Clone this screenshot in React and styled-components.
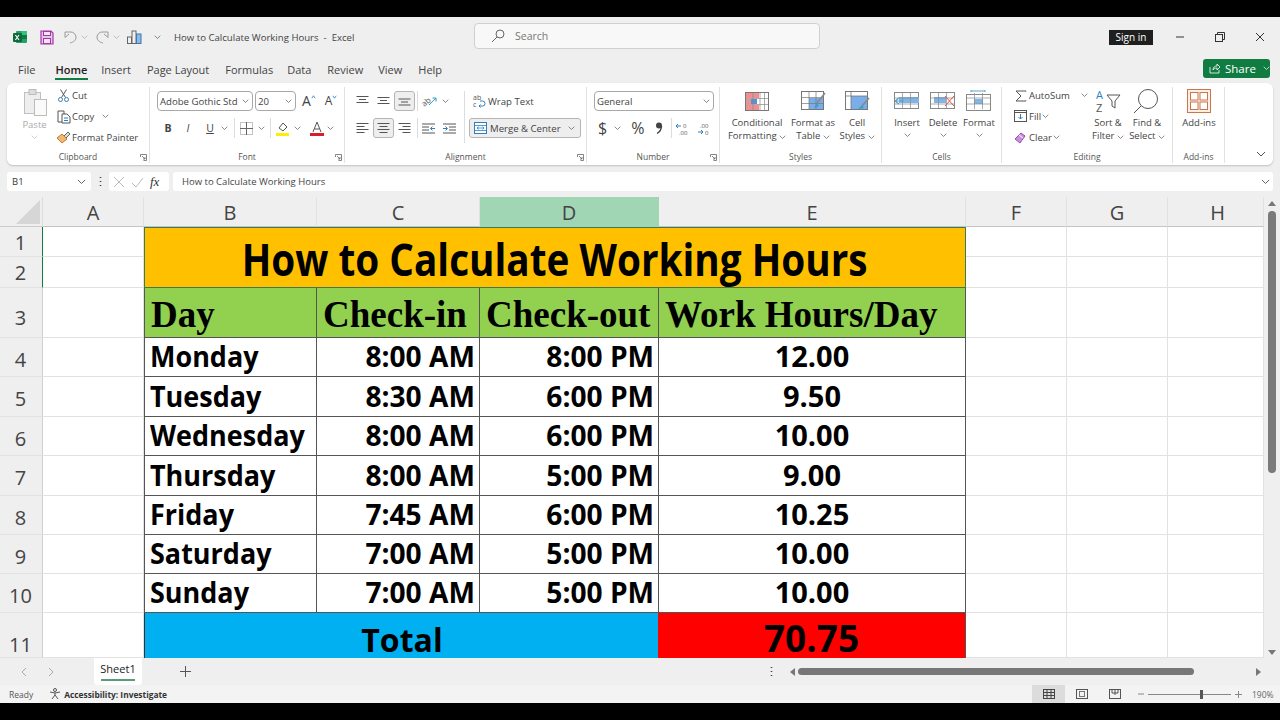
import React from "react";
import styled, { createGlobalStyle } from "styled-components";

const Global = createGlobalStyle`
  html, body { margin: 0; padding: 0; background: #000; width: 1280px; height: 720px; overflow: hidden; }
  * { box-sizing: border-box; }
  svg { overflow: visible; }
`;
const UI = `"Open Sans", "Noto Sans", "Liberation Sans", sans-serif`;

const Page = styled.div`
  width: 1280px; height: 720px; background: #000; padding: 17px 0; font-family: ${UI}; color: #3a3a3a;
`;
const Win = styled.div`
  width: 1280px; height: 686px; background: #efefef; display: flex; flex-direction: column;
`;
const TitleBar = styled.div`
  height: 40px; display: flex; align-items: center; padding: 0 0 0 13px; flex: none;
`;
const QuickIcons = styled.div`display: flex; align-items: center; gap: 0; width: 161px; flex: none;`;
const QIcon = styled.div`display: flex; align-items: center; width: ${p => p.$w}px; flex: none;`;
const Chev = styled.svg`flex: none; fill: none; stroke: ${p => p.$c || "#555"}; stroke-width: 1;`;
const TitleText = styled.div`font-size: 9.6px; color: #444; width: 300px; flex: none; white-space: pre;`;
const Search = styled.div`
  width: 346px; height: 26px; background: #f8f8f8; border: 1px solid #d0d0d0; border-radius: 4px; display: flex; align-items: center; gap: 10px; padding-left: 16px; font-size: 10.5px; color: #777; flex: none; margin-top: -2px;
`;
const TitleRight = styled.div`flex: 1; display: flex; align-items: center; justify-content: flex-end;`;
const SignIn = styled.div`
  background: #1f1f1f; color: #fff; font-size: 10px; width: 44px; height: 15px; line-height: 15px; text-align: center; margin-right: 7px;
`;
const WinBtn = styled.div`width: 40px; height: 20px; display: flex; align-items: center; justify-content: center;`;

const TabsRow = styled.div`height: 26px; display: flex; align-items: center; flex: none; padding: 0 10px 0 18px; position: relative;`;
const Tab = styled.div`
  font-size: 11px; margin-right: ${p => p.$mr ?? 15}px; height: 22px; line-height: 22px; color: ${p => p.$on ? "#222" : "#444"}; font-weight: ${p => p.$on ? 600 : 400}; position: relative;
  ${p => p.$on && `&:after{content:"";position:absolute;left:0;right:-1px;bottom:1px;height:2px;background:#107c41;}`}
`;
const Share = styled.div`
  margin-left: auto; width: 67px; height: 19px; background: #107c41; border-radius: 3px; color: #fff; font-size: 11.5px; display: flex; align-items: center; padding-left: 6px; gap: 1px; margin-top: -3px;
`;
const Ribbon = styled.div`
  margin: 0 7px 0 7px; height: 82px; background: #fff; border-radius: 6px; box-shadow: 0 1px 2px rgba(0,0,0,.2); display: flex; flex: none; position: relative; padding-top: 4px;
`;
const Group = styled.div`
  width: ${p => p.$w}px; flex: none; border-right: 1px solid #e1e1e1; height: 76px; display: flex; flex-direction: column; position: relative;
`;
const GroupBody = styled.div`flex: 1; display: flex; min-height: 0;`;
const GroupLabel = styled.div`
  height: 14px; font-size: 8.5px; color: #555; text-align: center; line-height: 16px; flex: none;
`;
const Launcher = styled.svg`position: absolute; right: 2px; bottom: 2px; width: 7px; height: 7px; fill: none; stroke: #666; stroke-width: .8;`;
const Col = styled.div`display: flex; flex-direction: column; width: ${p => p.$w ? p.$w + "px" : "auto"}; flex: none; align-items: ${p => p.$center ? "center" : "stretch"}; padding: ${p => p.$pad || 0}; gap: ${p => p.$gap || 0}px; margin-top: ${p => p.$mt || 0}px;`;
const Row = styled.div`display: flex; align-items: center; height: ${p => p.$h || 21}px; gap: ${p => p.$gap ?? 1}px; font-size: 9.5px; color: ${p => p.$c || "#444"}; white-space: nowrap; padding-left: ${p => p.$pl || 0}px; flex: none;`;
const RowIcon = styled.span`width: 15px; display: flex; justify-content: center; flex: none;`;
const Big = styled.div`
  display: flex; flex-direction: column; align-items: center; width: ${p => p.$w}px; margin-left: ${p => p.$ml || 0}px; flex: none; font-size: 9.5px; line-height: 13px; color: ${p => p.$c || "#444"}; text-align: center; white-space: nowrap; padding-top: 1px;
`;
const IconBox = styled.div`height: ${p => p.$h || 26}px; display: flex; align-items: center; justify-content: center; margin-bottom: 2px; flex: none;`;
const LowChev = styled.span`display: flex; margin-top: 4px;`;
const Select = styled.div`
  width: ${p => p.$w}px; height: 20px; border: 1px solid #a8a8a8; border-radius: 4px; font-size: 9.6px; display: flex; align-items: center; justify-content: space-between; padding: 0 3px 0 2px; color: #444; flex: none; background: #fff; white-space: nowrap;
`;
const Toggle = styled.div`
  width: ${p => p.$w || 20}px; height: 20px; display: flex; align-items: center; justify-content: ${p => p.$left ? "flex-start" : "center"}; gap: 3px; flex: none; border-radius: 3px;
  ${p => p.$on && `background:#eee;border:1px solid #b5b5b5;`}
  ${p => p.$left && `padding-left:4px;`}
  font-size: 9.6px; color: #444; white-space: nowrap;
`;
const Gap = styled.span`width: ${p => p.$w}px; flex: none;`;
const VSep = styled.div`width: 1px; height: ${p => p.$h || 20}px; background: #ddd; flex: none; margin: ${p => p.$m || "0 3px"};`;
const GlyphB = styled.span`font-size: ${p => p.$s || 11}px; font-weight: ${p => p.$wt || 400}; font-style: ${p => p.$it ? "italic" : "normal"}; text-decoration: ${p => p.$u ? "underline" : "none"}; color: #444; line-height: 1;`;
const PushRight = styled.span`margin-left: auto; margin-right: 5px; display: flex;`;
const Collapse = styled.span`position: absolute; right: 7px; bottom: 8px; display: flex;`;
const FxGlyph = styled.span`font-family: "Liberation Serif", serif; font-style: italic; font-size: 13px; color: #333;`;

const FBar = styled.div`height: 19px; margin: 7px 7px 0 7px; display: flex; flex: none; gap: 0; align-items: center;`;
const NameBox = styled.div`width: 84px; height: 19px; background: #fff; border-radius: 3px; font-size: 9.5px; padding: 0 5px 0 5px; display: flex; align-items: center; justify-content: space-between; flex: none;`;
const Dots = styled.div`width: 18px; display: flex; justify-content: center; flex: none;`;
const FxBox = styled.div`width: 60px; height: 19px; background: #fff; border-radius: 3px; display: flex; align-items: center; gap: 6px; padding-left: 4px; flex: none; margin-right: 4px;`;
const Formula = styled.div`flex: 1; height: 19px; background: #fff; border-radius: 3px; font-size: 9.5px; display: flex; align-items: center; justify-content: space-between; padding: 0 3px 0 9px; color: #444;`;

const Sheet = styled.div`
  margin-top: 6px; height: 461px; display: grid; flex: none; background: #fff;
  grid-template-columns: 43px 101px 173px 163px 179px 307px 101px 101px 96px 16px;
  grid-template-rows: 30px 30px 31px 50px 39px 40px 39px 40px 39px 39px 39px 45px;
`;
const Corner = styled.div`background: #efefef; position: relative; border-right: 1px solid #ddd; border-bottom: 1px solid #ccc;
  &:after{content:"";position:absolute;right:2px;bottom:2px;width:0;height:0;border-style:solid;border-width:0 0 24px 24px;border-color:transparent transparent #d6d6d6 transparent;}
`;
const ColHead = styled.div`
  background: ${p => p.$sel ? "#a1d6b4" : "#efefef"}; border-right: 1px solid ${p => p.$sel ? "#a1d6b4" : "#e2e2e2"}; border-bottom: 1px solid ${p => p.$sel ? "#a1d6b4" : "#c4c4c4"};
  font-size: 20px; color: #444; display: flex; align-items: center; justify-content: center; padding-top: 2px; padding-left: ${p => p.$pl || 0}px;
`;
const RowHead = styled.div`
  background: #efefef; border-right: 1px solid ${p => p.$sel ? "#107c41" : "#d0d0d0"}; border-bottom: 1px solid #e2e2e2; font-size: 20px; color: #444; display: flex; align-items: center; justify-content: center; padding: ${p => p.$dy || 0}px 1px 0 0; line-height: 1;
`;
const Empty = styled.div`background: #fff; border-right: 1px solid #e2e2e2; border-bottom: 1px solid #e2e2e2;`;
const Scroll = styled.div`grid-column: 10; grid-row: 1 / span 12; background: #efefef; display: flex; flex-direction: column; align-items: center; padding-top: 4px; position: relative;`;
const Thumb = styled.div`width: 8px; height: 262px; border-radius: 4px; background: #7a7a7a; margin-top: 5px; flex: none;`;
const Tri = styled.div`width: 0; height: 0; border-style: solid; border-width: ${p => p.$up ? "0 4px 5px 4px" : "5px 4px 0 4px"}; border-color: ${p => p.$up ? "transparent transparent #777 transparent" : "#777 transparent transparent transparent"}; flex: none; margin-top: ${p => p.$auto ? "auto" : 0}; margin-bottom: ${p => p.$auto ? "3px" : 0};`;
const BODY = `"Open Sans", "Noto Sans", sans-serif`;
const TitleCell = styled.div`
  grid-column: 3 / span 4; grid-row: 2 / span 2; background: #ffc000; border: 1px solid #3f7a4f; display: flex; align-items: center; justify-content: center;
  font-family: ${BODY}; font-weight: 700; font-size: 44px; line-height: 1; color: #000; padding-top: 3px;
`;
const Squeeze = styled.span`display: inline-block; transform: scaleX(${p => p.$x}); transform-origin: ${p => p.$o || "center"}; white-space: nowrap;`;
const HeadCell = styled.div`
  background: #92d050; border-right: 1px solid #555; border-bottom: 1px solid #555; font-family: "Liberation Serif", serif; font-weight: 700; font-size: 37px; line-height: 1; color: #000; display: flex; align-items: center; padding-left: 6px; white-space: nowrap; padding-top: 3px;
  ${p => p.$first && "border-left:1px solid #555;"}
`;
const Cell = styled.div`
  background: #fff; border-right: 1px solid #555; border-bottom: 1px solid #555; font-family: ${BODY}; font-weight: 700; font-size: 29px; line-height: 1; color: #000; display: flex; align-items: center; white-space: nowrap;
  justify-content: ${p => p.$a === "r" ? "flex-end" : p.$a === "c" ? "center" : "flex-start"};
  padding: 0 ${p => p.$a === "r" ? 4 : 5}px 3px 5px;
  ${p => p.$first && "border-left:1px solid #555;"}
`;
const Total = styled.div`
  grid-column: ${p => p.$col}; grid-row: 12; background: ${p => p.$bg}; display: flex; justify-content: center; align-items: center; font-family: ${BODY}; font-weight: 700; color: #000; font-size: ${p => p.$s}px; line-height: 1; padding-top: ${p => p.$pt}px; border-left: ${p => p.$br ? "none" : "1px solid #333"}; margin-left: ${p => p.$br ? -1 : 0}px; border-right: ${p => p.$br ? "1px solid #555" : "none"};
`;

const SheetBar = styled.div`height: 27px; display: flex; align-items: center; flex: none; background: #efefef;`;
const Nav = styled.div`width: 94px; display: flex; gap: 19px; padding-left: 20px; flex: none;`;
const SheetTab = styled.div`width: 48px; height: 27px; background: #fff; border-radius: 0 0 3px 3px; font-size: 11px; font-weight: 400; color: #222; text-align: center; line-height: 22px; position: relative; flex: none;
  &:after{content:"";position:absolute;left:7px;right:7px;bottom:4px;height:2px;background:#5b9b7b;}
`;
const PlusBox = styled.div`margin-left: 38px; flex: none; width: 20px; display: flex;`;
const HScroll = styled.div`margin-left: auto; display: flex; align-items: center; width: 491px; flex: none; margin-right: 19px; gap: 3px;`;
const HDots = styled.span`display: flex; margin-right: 14px; flex: none;`;
const HThumb = styled.div`width: 396px; height: 7px; background: #777; border-radius: 4px; flex: none;`;
const HTri = styled.div`width: 0; height: 0; border-style: solid; border-width: ${p => p.$left ? "4px 5px 4px 0" : "4px 0 4px 5px"}; border-color: ${p => p.$left ? "transparent #777 transparent transparent" : "transparent transparent transparent #777"}; flex: none; margin-left: ${p => p.$auto ? "auto" : 0};`;
const Status = styled.div`height: 18px; background: #f3f3f3; display: flex; align-items: center; padding-left: 9px; font-size: 8.5px; color: #555; flex: none;`;
const Access = styled.div`display: flex; align-items: center; gap: 2px; margin-left: 16px; font-weight: 700; color: #333; font-size: 8.4px;`;
const StatusRight = styled.div`margin-left: auto; display: flex; align-items: center; height: 18px;`;
const ViewBtn = styled.div`width: 33px; height: 18px; display: flex; align-items: center; justify-content: center; background: ${p => p.$on ? "#dcdcdc" : "transparent"}; flex: none;`;
const Zoom = styled.div`display: flex; align-items: center; margin-left: 7px; width: 104px; gap: 4px; flex: none;`;
const Slider = styled.div`width: 83px; height: 1px; background: #888; position: relative; flex: none;
  &:after{content:"";position:absolute;left:52px;top:-4px;width:3px;height:9px;background:#555;}
`;
const Pct = styled.div`font-size: 8.5px; color: #666; width: 28px; text-align: left; margin-left: 10px; flex: none;`;

const Down = ({ s = 7, c }) => <Chev $c={c} width={s} height={s * 0.6} viewBox="0 0 10 6"><path d="M1 1l4 4 4-4" /></Chev>;
const Svg = ({ w, h, children, ...r }) => <svg width={w} height={h} viewBox={`0 0 ${w} ${h}`} fill="none" style={{ flex: "none" }} {...r}>{children}</svg>;
const Launch = () => <Launcher viewBox="0 0 7 7"><path d="M.5 3V.5H6.5V6.5H3.5M2 2l3 3M5 3v2H3" /></Launcher>;

const ExcelLogo = () => (
  <Svg w={15} h={14}>
    <rect x="3" y="1" width="11" height="12" rx="1" fill="#21a366" />
    <rect x="8.5" y="1" width="5.5" height="4" fill="#33c481" />
    <rect x="8.5" y="5" width="5.5" height="4" fill="#107c41" />
    <rect x="0" y="3" width="9" height="9" rx="1" fill="#0e6a38" />
    <path d="M2.4 5l3.6 5M6 5L2.4 10" stroke="#fff" strokeWidth="1.1" />
  </Svg>
);
const Save = () => (
  <Svg w={14} h={15}>
    <path d="M1 1h10l2 2v11H1z" stroke="#a436a8" strokeWidth="1.2" fill="#e6c7ea" />
    <rect x="3.5" y="1.5" width="7" height="4" stroke="#a436a8" fill="#f3e6f4" />
    <rect x="3.5" y="8.5" width="7" height="5" stroke="#a436a8" fill="#f3e6f4" />
  </Svg>
);
const Undo = ({ flip }) => (
  <Svg w={13} h={14} style={{ flex: "none", transform: flip ? "scaleX(-1)" : "none" }}>
    <path d="M6 13c4-1 6-3 6-6 0-3-3-5-5-5H1M1 2v5.5M1 7.5L5 4" stroke="#9a9a9a" strokeWidth="1" />
  </Svg>
);
const Chart = () => (
  <Svg w={15} h={14}>
    <rect x=".5" y="7" width="4" height="6.5" stroke="#666" />
    <rect x="5" y="1" width="4" height="12.5" stroke="#666" />
    <rect x="9.5" y="4" width="4.5" height="9.5" fill="#8db9e2" stroke="#3d78b3" />
  </Svg>
);
const Clipboard = () => (
  <Svg w={24} h={27}>
    <rect x="1.500" y="3.500" width="16" height="21" fill="#eee" stroke="#c0c0c0" />
    <rect x="6" y=".5" width="7" height="5" fill="#ddd" stroke="#bbb" />
    <rect x="11.500" y="10.500" width="12" height="16" fill="#fafafa" stroke="#bcbcbc" />
  </Svg>
);
const Scissors = () => (
  <Svg w={11} h={13}><path d="M2.500 .5l5 8M8.500 .5l-5 8" stroke="#555" /><circle cx="2.500" cy="10.500" r="2" stroke="#2f7fbf" /><circle cx="8.500" cy="10.500" r="2" stroke="#2f7fbf" /></Svg>
);
const Copy = () => (
  <Svg w={14} h={14}><path d="M1 1h6v3M1 1v11h4" stroke="#555" /><path d="M5 4h5l3 3v6H5z" stroke="#555" fill="#fff" /><path d="M7 8h4M7 10.500h4" stroke="#2f7fbf" /></Svg>
);
const Brush = () => (
  <Svg w={15} h={13}><path d="M8 5l4-4 2 2-4 4" stroke="#666" fill="#ddd" /><path d="M1 7l5-4 5 5-5 4z" fill="#f1b873" stroke="#c67b2f" /></Svg>
);
const Lines = ({ kind }) => {
  const w = [12, 8, 12, 8];
  return (
    <Svg w={13} h={12}>
      {[1.5, 4.5, 7.5, 10.5].map((y, i) => {
        const ww = kind === "center" ? (i % 2 ? 8 : 12) : w[i];
        const x = kind === "left" ? 0.5 : kind === "right" ? 12.5 - ww : 6.5 - ww / 2;
        return <path key={y} d={`M${x} ${y}h${ww}`} stroke="#555" />;
      })}
    </Svg>
  );
};
const VAlign = ({ y }) => (
  <Svg w={13} h={10}>
    <path d={`M0.5 ${y}h12M3 ${y + 3}h7`} stroke="#555" />
    <path d={`M0.5 ${y + 6}h12`} stroke="#555" />
  </Svg>
);
const Indent = ({ flip }) => (
  <Svg w={13} h={11} style={{ flex: "none", transform: flip ? "scaleX(-1)" : "none" }}>
    <path d="M0 1h13M6 4h7M6 7h7M0 10h13" stroke="#555" />
    <path d="M0 5.500h4M2.500 3.500l2 2-2 2" stroke="#2f7fbf" />
  </Svg>
);
const Orient = () => (
  <Svg w={15} h={13}><text x="0" y="10" fontSize="8" fill="#555" transform="rotate(-40 4 8)" fontFamily="Open Sans">ab</text><path d="M7 10L14 3M10.500 3H14V6.500" stroke="#2f9fb5" /></Svg>
);
const Wrap = () => (
  <Svg w={12} h={14}><text x="0" y="6" fontSize="7" fill="#555" fontFamily="Open Sans">ab</text><text x="0" y="13" fontSize="7" fill="#555" fontFamily="Open Sans">c</text><path d="M7 7h2.500a2 2 0 010 5H6M7.500 10.500L6 12l1.500 1.500" stroke="#2f7fbf" /></Svg>
);
const Merge = () => (
  <Svg w={13} h={12}><rect x=".5" y=".5" width="12" height="11" stroke="#2f7fbf" fill="#fff" /><path d="M.5 3.500h12M.5 8.500h12M3 6h7M3 6l1.500-1.500M3 6l1.500 1.500M10 6L8.500 4.500M10 6L8.500 7.500" stroke="#2f7fbf" strokeWidth=".8" /></Svg>
);
const Borders = () => (
  <Svg w={13} h={13}><rect x=".5" y=".5" width="12" height="12" stroke="#888" strokeDasharray="1 1" /><path d="M6.500 0v13M0 6.500h13" stroke="#666" /></Svg>
);
const Fill = () => (
  <Svg w={13} h={15}><path d="M3 7l4-5 4 4-4 4z" stroke="#555" fill="#fff" /><rect y="12" width="13" height="3" fill="#ffee00" /></Svg>
);
const FontColor = () => (
  <Svg w={14} h={15}><path d="M3 11L7 1l4 10M4.500 8h5" stroke="#555" /><rect y="12" width="14" height="3" fill="#d81e2c" /></Svg>
);
const Comma = () => (
  <Svg w={8} h={12}><circle cx="4" cy="3.500" r="3" fill="#444" /><path d="M6.500 4c0 4-2 6-4.500 7.500" stroke="#444" strokeWidth="1.400" /></Svg>
);
const CondFmt = () => (
  <Svg w={24} h={19}>
    <rect x=".5" y=".5" width="23" height="18" fill="#fff" stroke="#777" />
    <rect x="1" y="1" width="13" height="5" fill="#f08f8f" /><rect x="1" y="7" width="5" height="5" fill="#f08f8f" /><rect x="6" y="7" width="6" height="5" fill="#5c8fd6" /><rect x="1" y="13" width="13" height="5" fill="#f08f8f" />
    <path d="M8 1v17M15 1v17M19.500 1v17M1 6.500h22M1 12.500h22" stroke="#888" strokeWidth=".7" />
  </Svg>
);
const FmtTable = () => (
  <Svg w={25} h={20}>
    <rect x=".5" y=".5" width="22" height="18" fill="#fff" stroke="#777" />
    <rect x="8" y="7" width="14" height="11" fill="#79aeea" />
    <path d="M8 1v17M15 1v17M1 6.500h22M1 12.500h22" stroke="#777" strokeWidth=".7" />
    <path d="M24 2l-8 10" stroke="#888" strokeWidth="1.600" />
    <path d="M16 12l-3 5 5-2z" fill="#3f9dc9" />
  </Svg>
);
const CellStyles = () => (
  <Svg w={25} h={20}>
    <rect x=".5" y=".5" width="22" height="18" fill="#fff" stroke="#777" />
    <rect x="6" y="5" width="16" height="13" fill="#79aeea" />
    <path d="M1 5h22M6 1v17" stroke="#777" strokeWidth=".8" />
    <path d="M24 7l-7 8" stroke="#888" strokeWidth="1.600" />
    <path d="M17 14l-4 4 6-1z" fill="#3f9dc9" />
  </Svg>
);
const CellIcon = ({ kind }) => (
  <Svg w={26} h={22}>
    {kind === "format" && <path d="M5 1h14M5 0v2M19 0v2" stroke="#5aa0c8" />}
    <rect x=".5" y={kind === "format" ? 4.5 : 2.5} width="24" height="16" fill="#fff" stroke="#888" />
    <rect x={kind === "format" ? 8 : kind === "insert" ? 5 : 4} y={kind === "format" ? 9 : 7} width={kind === "delete" ? 12 : kind === "format" ? 9 : 20} height={kind === "format" ? 5 : 6} fill="#7fb5e8" />
    <path d="M8.500 3v16M16.500 3v16M1 8h24M1 14h24" stroke="#888" strokeWidth=".7" />
    {kind === "insert" && <path d="M1 11h9M1 11l4-3M1 11l4 3" stroke="#5aa0c8" strokeWidth="1.2" />}
    {kind === "delete" && <path d="M15 6l9 10M24 6l-9 10" stroke="#d9534f" />}
  </Svg>
);
const Sigma = () => <Svg w={12} h={12}><path d="M11 1.500V1H1l5 5-5 5h10v-.5" stroke="#555" /></Svg>;
const FillIc = () => <Svg w={14} h={13}><rect x=".5" y=".5" width="12" height="11" stroke="#555" /><path d="M1 2.500h11" stroke="#555" /><path d="M6.500 4v5M4.500 7l2 2 2-2" stroke="#2f7fbf" /></Svg>;
const Eraser = () => <Svg w={13} h={13}><path d="M1 8l6-6 4 3-5 7z" fill="#c78fdc" stroke="#9a4fb5" /><path d="M5 4l4 3" stroke="#fff" /></Svg>;
const SortIc = () => (
  <Svg w={26} h={24}>
    <text x="1" y="10" fontSize="11" fill="#2f7fbf" fontFamily="Open Sans">A</text>
    <text x="1" y="23" fontSize="11" fill="#555" fontFamily="Open Sans">Z</text>
    <path d="M12 6h13l-5 6v7l-3-2v-5z" stroke="#555" fill="#fff" />
  </Svg>
);
const Find = () => <Svg w={26} h={25}><circle cx="14" cy="10" r="9.500" stroke="#555" /><path d="M7 17L0 24" stroke="#555" /></Svg>;
const AddIns = () => (
  <Svg w={24} h={24}><rect x=".5" y=".5" width="23" height="23" stroke="#c9764b" fill="#fbeee7" /><rect x="3.500" y="3.500" width="7.500" height="7.500" stroke="#c9764b" fill="#fff" /><rect x="13" y="3.500" width="7.500" height="7.500" stroke="#c9764b" fill="#fff" /><rect x="3.500" y="13" width="7.500" height="7.500" stroke="#c9764b" fill="#fff" /><rect x="13" y="13" width="7.500" height="7.500" stroke="#c9764b" fill="#fff" /></Svg>
);

const hours = [
  ["Monday", "8:00 AM", "8:00 PM", "12.00"],
  ["Tuesday", "8:30 AM", "6:00 PM", "9.50"],
  ["Wednesday", "8:00 AM", "6:00 PM", "10.00"],
  ["Thursday", "8:00 AM", "5:00 PM", "9.00"],
  ["Friday", "7:45 AM", "6:00 PM", "10.25"],
  ["Saturday", "7:00 AM", "5:00 PM", "10.00"],
  ["Sunday", "7:00 AM", "5:00 PM", "10.00"],
];

const TabsList = [["File", 20], ["Home", 14], ["Insert", 16], ["Page Layout", 16], ["Formulas", 14], ["Data", 16], ["Review", 15], ["View", 16], ["Help", 0]];

export default function App() {
  const tail = ["F", "G", "H"];
  return (
    <Page>
      <Global />
      <Win>
        <TitleBar>
          <QuickIcons>
            <QIcon $w={27}><ExcelLogo /></QIcon>
            <QIcon $w={24}><Save /></QIcon>
            <QIcon $w={32}><Undo /><Gap $w={4} /><Down c="#aaa" /></QIcon>
            <QIcon $w={31}><Undo flip /><Gap $w={4} /><Down c="#aaa" /></QIcon>
            <QIcon $w={27}><Chart /></QIcon>
            <QIcon $w={20}><Down /></QIcon>
          </QuickIcons>
          <TitleText>{"How to Calculate Working Hours  -  Excel"}</TitleText>
          <Search>
            <Svg w={14} h={14}><circle cx="9" cy="5" r="4" stroke="#666" /><path d="M6 8l-5 5" stroke="#666" /></Svg>
            Search
          </Search>
          <TitleRight>
            <SignIn>Sign in</SignIn>
            <WinBtn><Svg w={10} h={10}><path d="M1 5h8" stroke="#333" /></Svg></WinBtn>
            <WinBtn><Svg w={10} h={10}><rect x=".5" y="2.500" width="7" height="7" stroke="#333" /><path d="M2.500 2V.5h7v7H8" stroke="#333" /></Svg></WinBtn>
            <WinBtn><Svg w={10} h={10}><path d="M1 1l8 8M9 1L1 9" stroke="#333" /></Svg></WinBtn>
          </TitleRight>
        </TitleBar>

        <TabsRow>
          {TabsList.map(([t, m]) => <Tab key={t} $on={t === "Home"} $mr={m}>{t}</Tab>)}
          <Share>
            <Svg w={12} h={11}><path d="M1 4v6h9V7M4 7c0-3 2-4 4-4V1l3 3-3 3V5C6 5 5 5.500 4 7z" stroke="#fff" strokeWidth=".8" /></Svg>
            <Gap $w={2} />
            Share
            <Gap $w={5} />
            <Down c="#fff" />
          </Share>
        </TabsRow>

        <Ribbon>
          <Group $w={143}>
            <GroupBody>
              <Big $w={43} $ml={6} $c="#aaa">
                <IconBox $h={28}><Clipboard /></IconBox>
                Paste
                <LowChev><Down c="#bbb" /></LowChev>
              </Big>
              <Col $mt={-2}>
                <Row><RowIcon><Scissors /></RowIcon>Cut</Row>
                <Row><RowIcon><Copy /></RowIcon>Copy<Gap $w={6} /><Down /></Row>
                <Row><RowIcon><Brush /></RowIcon>Format Painter</Row>
              </Col>
            </GroupBody>
            <GroupLabel>Clipboard</GroupLabel>
            <Launch />
          </Group>

          <Group $w={195}>
            <GroupBody>
              <Col $pad="5px 0 0 7px" $gap={7} $mt={-1}>
                <Row $h={20} $gap={0}>
                  <Select $w={96}>Adobe Gothic Std<Down /></Select>
                  <Gap $w={2} />
                  <Select $w={41}>20<Down /></Select>
                  <Gap $w={6} />
                  <GlyphB $s={14}>A</GlyphB><Chev width="5" height="4" viewBox="0 0 6 4" style={{ marginTop: -8 }} $c="#2f7fbf"><path d="M1 3.500l2-3 2 3" /></Chev>
                  <Gap $w={9} />
                  <GlyphB $s={12}>A</GlyphB><Chev width="5" height="4" viewBox="0 0 6 4" style={{ marginTop: -8 }} $c="#2f7fbf"><path d="M1 .5l2 3 2-3" /></Chev>
                </Row>
                <Row $h={20} $gap={0} $pl={1}>
                  <Toggle><GlyphB $wt={700} $s={10.5}>B</GlyphB></Toggle>
                  <Toggle><GlyphB $it $s={10.5}>I</GlyphB></Toggle>
                  <Gap $w={2} />
                  <Toggle><GlyphB $u $s={10.5}>U</GlyphB></Toggle>
                  <Gap $w={1} />
                  <Down />
                  <VSep $m="0 5px 0 6px" />
                  <Borders />
                  <Gap $w={5} /><Down />
                  <VSep $m="0 5px" />
                  <Fill />
                  <Gap $w={5} /><Down />
                  <Gap $w={9} />
                  <FontColor />
                  <Gap $w={3} /><Down />
                </Row>
              </Col>
            </GroupBody>
            <GroupLabel>Font</GroupLabel>
            <Launch />
          </Group>

          <Group $w={242}>
            <GroupBody>
              <Col $w={119} $pad="5px 0 0 7px" $gap={7} $mt={-1}>
                <Row $h={20} $gap={0}>
                  <Toggle $w={21}><VAlign y={0.5} /></Toggle>
                  <Toggle $w={21}><VAlign y={1.5} /></Toggle>
                  <Toggle $w={21} $on><VAlign y={3} /></Toggle>
                  <VSep $m="0 4px 0 2px" />
                  <Orient />
                  <Gap $w={5} />
                  <Down />
                </Row>
                <Row $h={20} $gap={0}>
                  <Toggle $w={21}><Lines kind="left" /></Toggle>
                  <Toggle $w={21} $on><Lines kind="center" /></Toggle>
                  <Toggle $w={21}><Lines kind="right" /></Toggle>
                  <VSep $m="0 4px 0 2px" />
                  <Indent flip />
                  <Gap $w={8} />
                  <Indent />
                </Row>
              </Col>
              <VSep $h={52} $m="4px 4px 0 0" />
              <Col $pad="5px 0 0 0" $gap={7} $mt={-1}>
                <Toggle $w={112} $left><Wrap />Wrap Text</Toggle>
                <Toggle $w={112} $left $on><Merge />Merge &amp; Center<PushRight><Down /></PushRight></Toggle>
              </Col>
            </GroupBody>
            <GroupLabel>Alignment</GroupLabel>
            <Launch />
          </Group>

          <Group $w={133}>
            <GroupBody>
              <Col $pad="5px 0 0 7px" $gap={7} $mt={-1}>
                <Select $w={120}>General<Down /></Select>
                <Row $h={20} $gap={0} $pl={4}>
                  <GlyphB $s={16}>$</GlyphB><Gap $w={7} /><Down />
                  <Gap $w={10} />
                  <GlyphB $s={16}>%</GlyphB>
                  <Gap $w={11} />
                  <Comma />
                  <VSep $m="0 4px 0 8px" />
                  <Svg w={14} h={13}><path d="M0 4h5M0 4l2-2M0 4l2 2" stroke="#2f7fbf" /><text x="7" y="6" fontSize="6" fill="#555" fontFamily="Open Sans">0</text><text x="3" y="13" fontSize="6" fill="#555" fontFamily="Open Sans">.00</text></Svg>
                  <Gap $w={7} />
                  <Svg w={14} h={13}><text x="3" y="6" fontSize="6" fill="#555" fontFamily="Open Sans">.00</text><path d="M1 10h5M6 10l-2-2M6 10l-2 2" stroke="#2f7fbf" /><text x="8" y="13" fontSize="6" fill="#555" fontFamily="Open Sans">0</text></Svg>
                </Row>
              </Col>
            </GroupBody>
            <GroupLabel>Number</GroupLabel>
            <Launch />
          </Group>

          <Group $w={162}>
            <GroupBody>
              <Big $w={64} $ml={5}><IconBox><CondFmt /></IconBox>Conditional<span>Formatting <Down /></span></Big>
              <Big $w={44} $ml={2}><IconBox><FmtTable /></IconBox>Format as<span>Table <Down /></span></Big>
              <Big $w={40} $ml={2}><IconBox><CellStyles /></IconBox>Cell<span>Styles <Down /></span></Big>
            </GroupBody>
            <GroupLabel>Styles</GroupLabel>
          </Group>

          <Group $w={120}>
            <GroupBody>
              <Big $w={36} $ml={7}><IconBox><CellIcon kind="insert" /></IconBox>Insert<LowChev><Down /></LowChev></Big>
              <Big $w={36}><IconBox><CellIcon kind="delete" /></IconBox>Delete<LowChev><Down /></LowChev></Big>
              <Big $w={36}><IconBox><CellIcon kind="format" /></IconBox>Format<LowChev><Down /></LowChev></Big>
            </GroupBody>
            <GroupLabel>Cells</GroupLabel>
          </Group>

          <Group $w={171}>
            <GroupBody>
              <Col $w={87} $pad="0 0 0 11px" $mt={-2}>
                <Row><RowIcon><Sigma /></RowIcon>AutoSum<Gap $w={9} /><Down /></Row>
                <Row><RowIcon><FillIc /></RowIcon>Fill<Down /></Row>
                <Row><RowIcon><Eraser /></RowIcon>Clear<Down /></Row>
              </Col>
              <Big $w={38}><IconBox><SortIc /></IconBox>Sort &amp;<span>Filter <Down /></span></Big>
              <Big $w={40}><IconBox><Find /></IconBox>Find &amp;<span>Select <Down /></span></Big>
            </GroupBody>
            <GroupLabel>Editing</GroupLabel>
          </Group>

          <Group $w={52}>
            <GroupBody>
              <Big $w={52}><IconBox><AddIns /></IconBox>Add-ins</Big>
            </GroupBody>
            <GroupLabel>Add-ins</GroupLabel>
          </Group>
          <Collapse><Down s={10} /></Collapse>
        </Ribbon>

        <FBar>
          <NameBox>B1<Down s={9} /></NameBox>
          <Dots><Svg w={3} h={11}><path d="M1.500 1v1M1.500 5v1M1.500 9v1" stroke="#444" strokeWidth="1.600" /></Svg></Dots>
          <FxBox>
            <Svg w={12} h={12}><path d="M1 1l10 10M11 1L1 11" stroke="#bbb" /></Svg>
            <Svg w={13} h={12}><path d="M1 7l4 4 7-9" stroke="#bbb" /></Svg>
            <FxGlyph>fx</FxGlyph>
          </FxBox>
          <Formula>How to Calculate Working Hours<Down s={9} /></Formula>
        </FBar>

        <Sheet>
          <Corner />
          {["A", "B", "C", "D", "E", "F", "G"].map(c => <ColHead key={c} $sel={c === "D"}>{c}</ColHead>)}
          <ColHead $pl={4}>H</ColHead>
          <Scroll><Tri $up /><Thumb /><Tri $auto /></Scroll>

          <RowHead $sel $dy={2}>1</RowHead><Empty />
          <TitleCell><Squeeze $x={0.88}>How to Calculate Working Hours</Squeeze></TitleCell>
          {tail.map(c => <Empty key={c} />)}

          <RowHead $sel $dy={1}>2</RowHead><Empty />
          {tail.map(c => <Empty key={c} />)}

          <RowHead $dy={10}>3</RowHead><Empty />
          <HeadCell $first>Day</HeadCell><HeadCell>Check-in</HeadCell><HeadCell>Check-out</HeadCell><HeadCell>Work Hours/Day</HeadCell>
          {tail.map(c => <Empty key={c} />)}

          {hours.map((r, i) => (
            <React.Fragment key={r[0]}>
              <RowHead $dy={5}>{i + 4}</RowHead><Empty />
              <Cell $first><Squeeze $x={0.93} $o="left">{r[0]}</Squeeze></Cell>
              <Cell $a="r"><Squeeze $x={0.97} $o="right">{r[1]}</Squeeze></Cell>
              <Cell $a="r"><Squeeze $x={0.97} $o="right">{r[2]}</Squeeze></Cell>
              <Cell $a="c">{r[3]}</Cell>
              {tail.map(c => <Empty key={c} />)}
            </React.Fragment>
          ))}

          <RowHead $dy={20}>11</RowHead><Empty />
          <Total $col="3 / span 3" $bg="#00b0f0" $s={32} $pt={9}>Total</Total>
          <Total $col="6" $bg="#ff0000" $s={37} $pt={3} $br>70.75</Total>
          {tail.map(c => <Empty key={c} />)}
        </Sheet>

        <SheetBar>
          <Nav>
            <Svg w={8} h={10}><path d="M6 1L2 5l4 4" stroke="#aaa" /></Svg>
            <Svg w={8} h={10}><path d="M2 1l4 4-4 4" stroke="#aaa" /></Svg>
          </Nav>
          <SheetTab>Sheet1</SheetTab>
          <PlusBox><Svg w={11} h={11}><path d="M5.500 0v11M0 5.500h11" stroke="#555" /></Svg></PlusBox>
          <HScroll>
            <HDots><Svg w={3} h={11}><path d="M1.500 1v1M1.500 5v1M1.500 9v1" stroke="#444" strokeWidth="1.600" /></Svg></HDots>
            <HTri $left />
            <HThumb />
            <HTri $auto />
          </HScroll>
        </SheetBar>

        <Status>
          Ready
          <Access>
            <Svg w={13} h={12}><circle cx="6" cy="2" r="1.500" stroke="#555" /><path d="M1 4l5 1 5-1M6 5v2M3 11l3-4 3 4" stroke="#555" /></Svg>
            Accessibility: Investigate
          </Access>
          <StatusRight>
            <ViewBtn $on><Svg w={12} h={10}><rect x=".5" y=".5" width="11" height="9" stroke="#444" /><path d="M4 0v10M8 0v10M0 3.500h12M0 6.500h12" stroke="#444" /></Svg></ViewBtn>
            <ViewBtn><Svg w={12} h={10}><rect x=".5" y=".5" width="11" height="9" stroke="#555" /><rect x="3.500" y="2.500" width="5" height="5" stroke="#777" /></Svg></ViewBtn>
            <ViewBtn><Svg w={12} h={10}><rect x=".5" y=".5" width="11" height="9" stroke="#555" /><path d="M6 0v6M3 0v4h6V0" stroke="#555" /></Svg></ViewBtn>
            <Zoom>
              <Svg w={6} h={2}><path d="M0 1h6" stroke="#888" /></Svg>
              <Slider />
              <Svg w={7} h={7}><path d="M0 3.500h7M3.500 0v7" stroke="#888" /></Svg>
            </Zoom>
            <Pct>190%</Pct>
          </StatusRight>
        </Status>
      </Win>
    </Page>
  );
}
